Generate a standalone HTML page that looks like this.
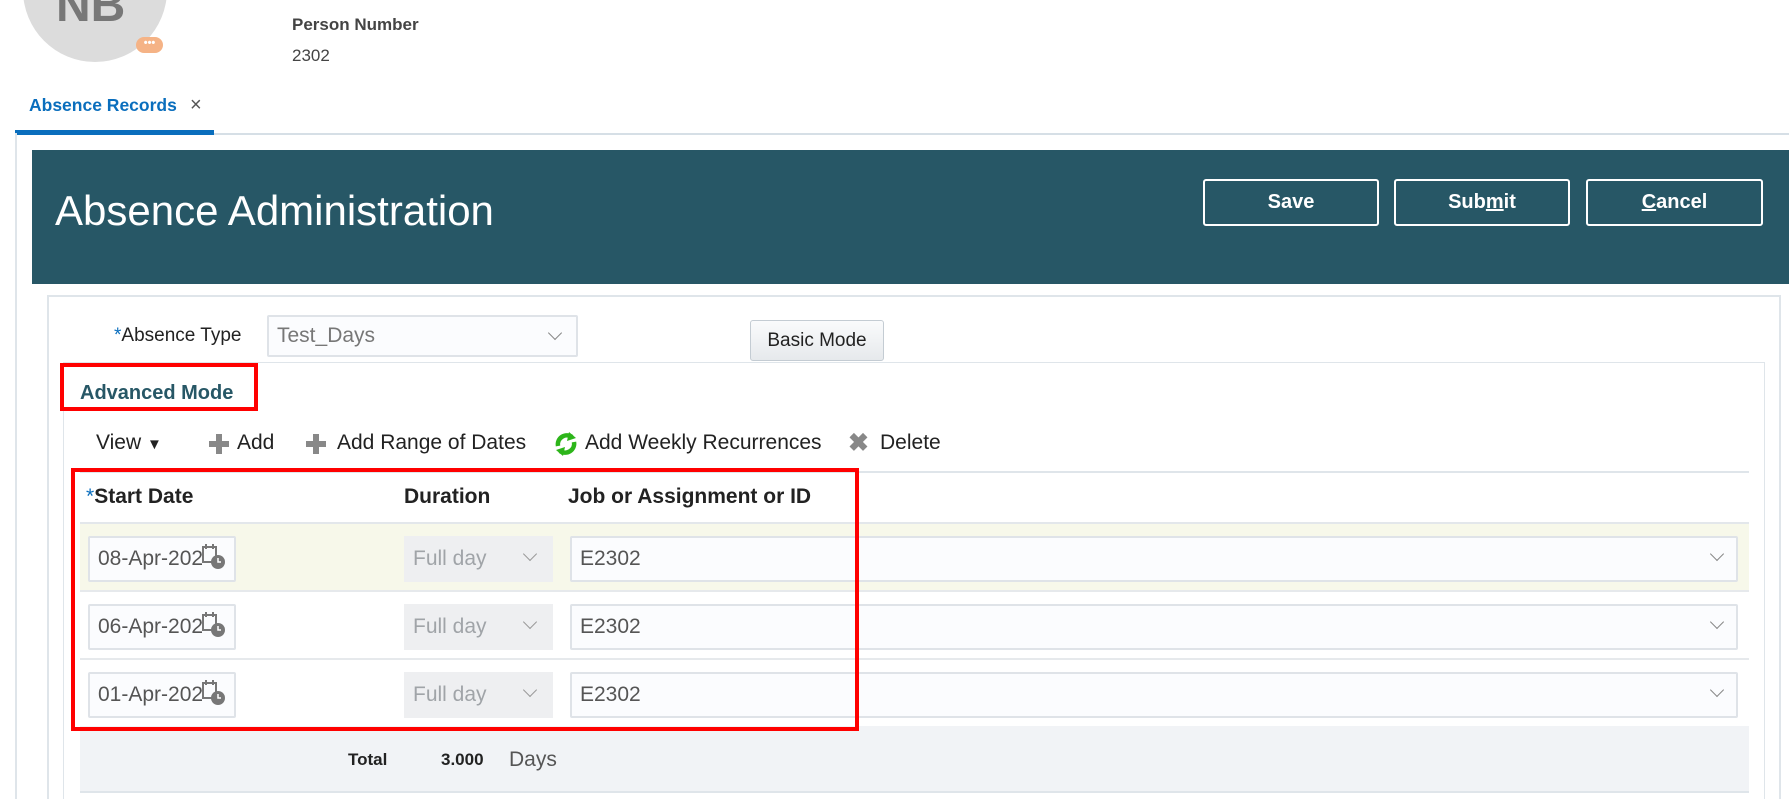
<!DOCTYPE html>
<html style="width:1789px;height:799px;overflow:hidden"><head><meta charset="utf-8"><style>
*{margin:0;padding:0;box-sizing:border-box}
body{width:1789px;height:799px;overflow:hidden;background:#fff;font-family:"Liberation Sans",sans-serif;position:relative;color:#333}
.a{position:absolute}
.btn{position:absolute;top:179px;height:47px;border:2px solid #fff;border-radius:3px;color:#fff;font-weight:bold;font-size:20px;text-align:center;line-height:43px}
.inp{position:absolute;height:46px;border:2px solid #dfe3e8;background:#fbfcfe;font-size:21px;color:#555;padding-left:8px;line-height:42px;border-radius:2px;overflow:hidden;white-space:nowrap}
.dis{position:absolute;height:46px;background:#eeeff1;font-size:21px;color:#a0a4a8;padding-left:9px;line-height:46px}
.chev{position:absolute;width:10px;height:10px;border-right:1.5px solid #888;border-bottom:1.5px solid #888;transform:rotate(45deg)}
.hd{font-weight:bold;font-size:21px;color:#222;top:485px}
.tb{top:431px;font-size:21px;color:#222}
</style></head><body>
<div class="a" style="left:23px;top:-82px;width:144px;height:144px;border-radius:50%;background:#dcdcdc"></div>
<div class="a" style="left:56px;top:-22px;font-size:48px;color:#777;font-weight:bold">NB</div>
<div class="a" style="left:136px;top:37px;width:27px;height:16px;border-radius:8px;background:#f5b386;color:#fff;font-size:11px;text-align:center;line-height:12px;font-weight:bold">•••</div>
<div class="a" style="left:292px;top:15px;font-size:17px;font-weight:bold;color:#444">Person Number</div>
<div class="a" style="left:292px;top:46px;font-size:17px;color:#444">2302</div>
<div class="a" style="left:29px;top:95px;font-size:17.5px;font-weight:bold;color:#0a6ebd">Absence Records</div>
<div class="a" style="left:190px;top:94px;font-size:20px;color:#555">×</div>
<div class="a" style="left:15px;top:133px;width:1774px;height:2px;background:#d6dfe6"></div>
<div class="a" style="left:15px;top:130px;width:199px;height:5px;background:#0a6ebd"></div>
<div class="a" style="left:15px;top:133px;width:2px;height:666px;background:#dfe5ea"></div>
<div class="a" style="left:32px;top:150px;width:1757px;height:134px;background:#275766"></div>
<div class="a" style="left:55px;top:187px;font-size:42px;color:#fff;font-weight:300">Absence Administration</div>
<div class="btn" style="left:1203px;width:176px">Save</div>
<div class="btn" style="left:1394px;width:176px">Sub<u>m</u>it</div>
<div class="btn" style="left:1586px;width:177px"><u>C</u>ancel</div>
<div class="a" style="left:47px;top:295px;width:1734px;height:504px;border:2px solid #dfe5ea;border-bottom:none"></div>
<div class="a" style="left:114px;top:325px;font-size:19px;color:#222"><span style="color:#0a6ebd">*</span>Absence Type</div>
<div class="inp" style="left:267px;top:315px;width:311px;height:42px;line-height:38px;color:#777">Test_Days</div>
<div class="chev" style="left:550px;top:328px"></div>
<div class="a" style="left:750px;top:320px;width:134px;height:41px;border:1px solid #c4ccd3;border-radius:3px;background:linear-gradient(#fafbfc,#e6e9ec);font-size:19px;color:#222;text-align:center;line-height:39px">Basic Mode</div>
<div class="a" style="left:63px;top:362px;width:1702px;height:437px;border:1px solid #dfe5ea;border-bottom:none"></div>
<div class="a" style="left:60px;top:363px;width:198px;height:48px;border:4px solid #f00"></div>
<div class="a" style="left:80px;top:382px;font-size:20px;font-weight:bold;color:#275766">Advanced Mode</div>
<div class="a tb" style="left:96px">View <span style="font-size:15px">▼</span></div>
<div class="a" style="left:209px;top:434px;width:20px;height:20px">
 <div class="a" style="left:7px;top:0;width:6px;height:20px;background:#888"></div><div class="a" style="left:0;top:7px;width:20px;height:6px;background:#888"></div></div>
<div class="a tb" style="left:237px">Add</div>
<div class="a" style="left:306px;top:434px;width:20px;height:20px">
 <div class="a" style="left:7px;top:0;width:6px;height:20px;background:#888"></div><div class="a" style="left:0;top:7px;width:20px;height:6px;background:#888"></div></div>
<div class="a tb" style="left:337px">Add Range of Dates</div>
<svg class="a" style="left:553px;top:429px" width="26" height="30" viewBox="0 0 26 30"><path d="M5 17 A9 9 0 0 1 19 8" fill="none" stroke="#2db51a" stroke-width="4.5"/><path d="M16 3 L23 9 L14 12 Z" fill="#2db51a"/><path d="M21 13 A9 9 0 0 1 7 22" fill="none" stroke="#2db51a" stroke-width="4.5"/><path d="M10 27 L3 21 L12 18 Z" fill="#2db51a"/></svg>
<div class="a tb" style="left:585px">Add Weekly Recurrences</div>
<div class="a" style="left:848px;top:431px;font-size:25px;font-weight:bold;color:#888;line-height:25px">✖</div>
<div class="a tb" style="left:880px">Delete</div>
<div class="a" style="left:80px;top:471px;width:1669px;height:2px;background:#dfe5ea"></div>
<div class="a hd" style="left:86px"><span style="color:#0a6ebd;font-weight:normal">*</span>Start Date</div>
<div class="a hd" style="left:404px">Duration</div>
<div class="a hd" style="left:568px">Job or Assignment or ID</div>
<div class="a" style="left:80px;top:522px;width:1669px;height:2px;background:#e3e7eb"></div>
<div class="a" style="left:80px;top:524px;width:1669px;height:66px;background:#f7f8ea"></div>
<div class="a" style="left:80px;top:590px;width:1669px;height:2px;background:#e6e9ec"></div>
<div class="a" style="left:80px;top:658px;width:1669px;height:2px;background:#e6e9ec"></div>
<div class="a" style="left:80px;top:726px;width:1669px;height:66px;background:#f1f3f6"></div>
<div class="a" style="left:80px;top:791px;width:1669px;height:2px;background:#dfe5ea"></div>
<div class="inp" style="left:88px;top:536px;width:148px">08-Apr-202</div>
<div class="inp" style="left:88px;top:604px;width:148px">06-Apr-202</div>
<div class="inp" style="left:88px;top:672px;width:148px">01-Apr-202</div>
<svg class="a" style="left:202px;top:543px" width="24" height="28" viewBox="0 0 24 28"><rect x="1" y="4" width="13" height="15" fill="#fbfcfe" stroke="#777" stroke-width="2"/><rect x="3" y="1" width="2" height="5" fill="#777"/><rect x="10" y="1" width="2" height="5" fill="#777"/><circle cx="16" cy="19" r="7" fill="#777"/><path d="M16 15v4h3" stroke="#fff" stroke-width="1.5" fill="none"/></svg>
<svg class="a" style="left:202px;top:611px" width="24" height="28" viewBox="0 0 24 28"><rect x="1" y="4" width="13" height="15" fill="#fbfcfe" stroke="#777" stroke-width="2"/><rect x="3" y="1" width="2" height="5" fill="#777"/><rect x="10" y="1" width="2" height="5" fill="#777"/><circle cx="16" cy="19" r="7" fill="#777"/><path d="M16 15v4h3" stroke="#fff" stroke-width="1.5" fill="none"/></svg>
<svg class="a" style="left:202px;top:679px" width="24" height="28" viewBox="0 0 24 28"><rect x="1" y="4" width="13" height="15" fill="#fbfcfe" stroke="#777" stroke-width="2"/><rect x="3" y="1" width="2" height="5" fill="#777"/><rect x="10" y="1" width="2" height="5" fill="#777"/><circle cx="16" cy="19" r="7" fill="#777"/><path d="M16 15v4h3" stroke="#fff" stroke-width="1.5" fill="none"/></svg>
<div class="dis" style="left:404px;top:536px;width:149px">Full day</div>
<div class="dis" style="left:404px;top:604px;width:149px">Full day</div>
<div class="dis" style="left:404px;top:672px;width:149px">Full day</div>
<div class="chev" style="left:525px;top:549px;border-color:#999"></div>
<div class="chev" style="left:525px;top:617px;border-color:#999"></div>
<div class="chev" style="left:525px;top:685px;border-color:#999"></div>
<div class="inp" style="left:570px;top:536px;width:1168px">E2302</div>
<div class="inp" style="left:570px;top:604px;width:1168px">E2302</div>
<div class="inp" style="left:570px;top:672px;width:1168px">E2302</div>
<div class="chev" style="left:1712px;top:549px"></div>
<div class="chev" style="left:1712px;top:617px"></div>
<div class="chev" style="left:1712px;top:685px"></div>
<div class="a" style="left:71px;top:468px;width:788px;height:263px;border:4px solid #f00"></div>
<div class="a" style="left:348px;top:750px;font-size:17px;font-weight:bold;color:#222">Total</div>
<div class="a" style="left:441px;top:750px;font-size:17px;font-weight:bold;color:#222">3.000</div>
<div class="a" style="left:509px;top:748px;font-size:21px;color:#555">Days</div>
</body></html>
